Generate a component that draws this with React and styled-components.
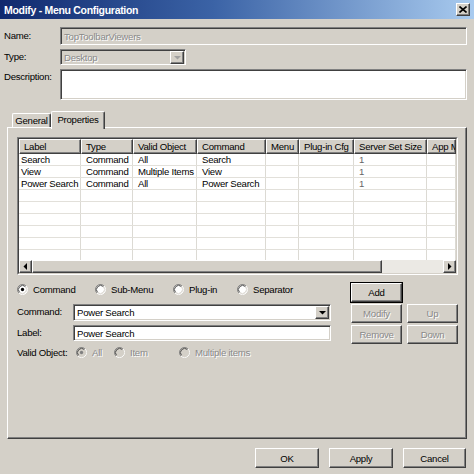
import React from 'react';
import styled, { createGlobalStyle, css } from 'styled-components';

const GlobalStyle = createGlobalStyle`
  html, body { margin: 0; padding: 0; background: #d4d0c8; }
  body {
    font-family: "Liberation Sans", Arial, sans-serif;
    font-size: 9.6px;
    letter-spacing: -0.25px;
    color: #000;
  }
  * { box-sizing: border-box; }
`;

const raised = css`
  border: 1px solid;
  border-color: #fff #404040 #404040 #fff;
  box-shadow: inset -1px -1px #808080;
  background: #d4d0c8;
`;

const sunken = css`
  border: 1px solid;
  border-color: #808080 #fff #fff #808080;
  box-shadow: inset 1px 1px #404040, inset -1px -1px #d4d0c8;
`;

const disabledText = css`
  color: #8a8a8a;
  text-shadow: 1px 1px 0 #fff;
`;

const Window = styled.div`
  width: 474px;
  height: 474px;
  display: flex;
  flex-direction: column;
  overflow: hidden;
  background: #d4d0c8;
`;

const TitleBar = styled.div`
  height: 19px;
  flex: none;
  display: flex;
  align-items: center;
  justify-content: space-between;
  padding: 0 4px 0 4px;
  background: linear-gradient(90deg, #10296e 0%, #3b63a6 45%, #a9cbef 100%);
`;

const Title = styled.span`
  color: #fff;
  font-weight: bold;
  font-size: 10.5px;
  letter-spacing: -0.3px;
`;

const CloseBtn = styled.div`
  ${raised}
  width: 14px;
  height: 13px;
  display: flex;
  align-items: center;
  justify-content: center;
`;

const TopForm = styled.div`
  display: grid;
  grid-template-columns: 56px 1fr;
  row-gap: 4px;
  padding: 8px 7px 0 4px;
`;

const FieldLabel = styled.div`
  padding-top: ${p => p.$pt ?? 3}px;
  white-space: nowrap;
  ${p => p.$disabled && disabledText}
`;

const TextBox = styled.div`
  ${sunken}
  height: ${p => p.$h}px;
  width: ${p => (p.$w ? `${p.$w}px` : 'auto')};
  background: ${p => (p.$disabled ? '#d4d0c8' : '#fff')};
  padding: 0 3px;
  display: flex;
  align-items: center;
  justify-content: space-between;
  white-space: nowrap;
  overflow: hidden;
`;

const BoxText = styled.span`
  ${p => p.$disabled && disabledText}
`;

const DropBtn = styled.div`
  ${raised}
  width: 14px;
  height: 13px;
  margin-right: -2px;
  display: flex;
  align-items: center;
  justify-content: center;
  flex: none;
`;

const TabArea = styled.div`
  margin: 11px 7px 0 7px;
  display: flex;
  flex-direction: column;
`;

const TabStrip = styled.div`
  display: flex;
  align-items: flex-end;
  height: 16px;
  padding-left: 5px;
`;

const Tab = styled.div`
  height: ${p => (p.$active ? 18 : 14)}px;
  width: ${p => p.$w}px;
  border: 1px solid;
  border-color: #fff #404040 transparent #fff;
  border-bottom: none;
  border-radius: 2px 2px 0 0;
  background: #d4d0c8;
  display: flex;
  align-items: ${p => (p.$active ? 'flex-start' : 'center')};
  padding-top: ${p => (p.$active ? 2 : 0)}px;
  justify-content: center;
  margin-bottom: ${p => (p.$active ? -2 : 0)}px;
  z-index: ${p => (p.$active ? 1 : 0)};
  box-shadow: inset -1px 0 #808080;
`;

const Panel = styled.div`
  height: 312px;
  border: 1px solid;
  border-color: #fff #404040 #404040 #fff;
  box-shadow: inset -1px -1px #808080;
  padding: 9px 8px 0 9px;
  display: flex;
  flex-direction: column;
`;

const ListOuter = styled.div`
  height: 138px;
  border: 1px solid;
  border-color: #808080 #fff #fff #808080;
`;

const ListInner = styled.div`
  height: 100%;
  border: 1px solid;
  border-color: #404040 #d4d0c8 #d4d0c8 #404040;
  background: #fff;
  display: flex;
  flex-direction: column;
`;

const COLS = '62px 52px 64px 69px 33px 55px 73px 1fr';

const HeaderRow = styled.div`
  display: grid;
  grid-template-columns: ${COLS};
  height: 15px;
  flex: none;
`;

const HeaderCell = styled.div`
  ${raised}
  padding-left: 4px;
  line-height: 13px;
  white-space: nowrap;
  overflow: hidden;
`;

const Body = styled.div`
  flex: 1;
  overflow: hidden;
`;

const Row = styled.div`
  display: grid;
  grid-template-columns: ${COLS};
  height: 12px;
  border-bottom: 1px solid #e2e0da;
`;

const Cell = styled.div`
  padding-left: ${p => (p.$first ? 2 : 5)}px;
  line-height: 11px;
  white-space: nowrap;
  overflow: hidden;
  border-right: 1px solid #dcdad4;
  color: ${p => (p.$dim ? '#666' : '#000')};
`;

const ScrollBar = styled.div`
  height: 13px;
  flex: none;
  display: flex;
`;

const ScrollBtn = styled.div`
  ${raised}
  width: 13px;
  height: 13px;
  flex: none;
  display: flex;
  align-items: center;
  justify-content: center;
`;

const Thumb = styled.div`
  ${raised}
  width: 350px;
  height: 13px;
  flex: none;
`;

const Track = styled.div`
  flex: 1;
  background: #ebe9e4;
`;

const Lower = styled.div`
  display: grid;
  grid-template-columns: 314px 107px;
  column-gap: 20px;
  margin-top: 8px;
`;

const LeftCol = styled.div`
  display: flex;
  flex-direction: column;
`;

const RadioRow = styled.div`
  display: grid;
  grid-template-columns: 78px 78px 64px auto;
  height: 13px;
  align-items: center;
`;

const RadioItem = styled.label`
  display: flex;
  align-items: center;
  gap: 5px;
  white-space: nowrap;
  width: ${p => (p.$w ? `${p.$w}px` : 'auto')};
  ${p => p.$disabled && disabledText}
`;

const FormRow = styled.div`
  display: grid;
  grid-template-columns: 56px 258px;
  align-items: start;
  margin-top: ${p => p.$mt}px;
`;

const ValidRow = styled.div`
  display: flex;
  align-items: center;
  height: 13px;
  margin-top: 5px;
`;

const ValidLabel = styled.div`
  width: 59px;
  white-space: nowrap;
`;

const BtnGrid = styled.div`
  display: grid;
  grid-template-columns: 51px 51px;
  column-gap: 5px;
  row-gap: 2px;
  align-content: start;
`;

const Button = styled.div`
  ${raised}
  height: ${p => p.$h || 19}px;
  width: ${p => (p.$w ? `${p.$w}px` : 'auto')};
  display: flex;
  align-items: center;
  justify-content: center;
  white-space: nowrap;
  ${p => p.$default && css`
    outline: 1px solid #000;
    outline-offset: 0;
  `}
  ${p => p.$disabled && disabledText}
`;

const Spacer = styled.div``;

const Footer = styled.div`
  display: flex;
  justify-content: flex-end;
  gap: 10px;
  margin-top: 9px;
  padding-right: 8px;
`;

const Radio = ({ checked, disabled }) => (
  <svg width="11" height="11" viewBox="0 0 12 12" style={{ flex: 'none' }}>
    <circle cx="6" cy="6" r="5" fill={disabled ? '#d4d0c8' : '#fff'} />
    <path d="M2.11 9.89 A5.5 5.5 0 0 1 9.89 2.11" fill="none" stroke="#808080" strokeWidth="1" />
    <path d="M2.82 9.18 A4.5 4.5 0 0 1 9.18 2.82" fill="none" stroke="#404040" strokeWidth="1" />
    <path d="M9.89 2.11 A5.5 5.5 0 0 1 2.11 9.89" fill="none" stroke="#fff" strokeWidth="1" />
    <path d="M9.18 2.82 A4.5 4.5 0 0 1 2.82 9.18" fill="none" stroke="#d4d0c8" strokeWidth="1" />
    {checked && <circle cx="6" cy="6" r="1.8" fill={disabled ? '#808080' : '#000'} />}
  </svg>
);

const Arrow = ({ dir, color = '#000' }) => {
  const pts = {
    down: '1,2 8,2 4.5,5.5',
    left: '5,1 5,8 1.5,4.5',
    right: '2,1 2,8 5.5,4.5',
  }[dir];
  const size = dir === 'down' ? [9, 7] : [7, 9];
  return (
    <svg width={size[0]} height={size[1]} viewBox={`0 0 ${size[0]} ${size[1]}`}>
      <polygon points={pts} fill={color} />
    </svg>
  );
};

const headers = ['Label', 'Type', 'Valid Object', 'Command', 'Menu', 'Plug-in Cfg', 'Server Set Size', 'App M'];
const data = [
  ['Search', 'Command', 'All', 'Search', '', '', '1', ''],
  ['View', 'Command', 'Multiple Items', 'View', '', '', '1', ''],
  ['Power Search', 'Command', 'All', 'Power Search', '', '', '1', ''],
];
const rows = [...data, ...Array.from({ length: 6 }, () => Array(8).fill(''))];

export default function App() {
  return (
    <Window>
      <GlobalStyle />
      <TitleBar>
        <Title>Modify - Menu Configuration</Title>
        <CloseBtn>
          <svg width="8" height="7" viewBox="0 0 8 7">
            <path d="M0.5 0.5 L7.5 6.5 M7.5 0.5 L0.5 6.5" stroke="#000" strokeWidth="1.6" />
          </svg>
        </CloseBtn>
      </TitleBar>

      <TopForm>
        <FieldLabel>Name:</FieldLabel>
        <TextBox $h={18} $disabled>
          <BoxText $disabled>TopToolbarViewers</BoxText>
        </TextBox>
        <FieldLabel $pt={2}>Type:</FieldLabel>
        <TextBox $h={16} $w={126} $disabled>
          <BoxText $disabled>Desktop</BoxText>
          <DropBtn>
            <Arrow dir="down" color="#a0a0a0" />
          </DropBtn>
        </TextBox>
        <FieldLabel $pt={2}>Description:</FieldLabel>
        <TextBox $h={31} />
      </TopForm>

      <TabArea>
        <TabStrip>
          <Tab $w={39}>General</Tab>
          <Tab $w={54} $active>Properties</Tab>
        </TabStrip>
        <Panel>
          <ListOuter>
            <ListInner>
              <HeaderRow>
                {headers.map(h => (
                  <HeaderCell key={h}>{h}</HeaderCell>
                ))}
              </HeaderRow>
              <Body>
                {rows.map((r, i) => (
                  <Row key={i}>
                    {r.map((c, j) => (
                      <Cell key={j} $first={j === 0} $dim={j === 6}>
                        {c}
                      </Cell>
                    ))}
                  </Row>
                ))}
              </Body>
              <ScrollBar>
                <ScrollBtn>
                  <Arrow dir="left" />
                </ScrollBtn>
                <Thumb />
                <Track />
                <ScrollBtn>
                  <Arrow dir="right" />
                </ScrollBtn>
              </ScrollBar>
            </ListInner>
          </ListOuter>

          <Lower>
            <LeftCol>
              <RadioRow>
                <RadioItem><Radio checked />Command</RadioItem>
                <RadioItem><Radio />Sub-Menu</RadioItem>
                <RadioItem><Radio />Plug-in</RadioItem>
                <RadioItem><Radio />Separator</RadioItem>
              </RadioRow>
              <FormRow $mt={8}>
                <FieldLabel $pt={2}>Command:</FieldLabel>
                <TextBox $h={17}>
                  <span>Power Search</span>
                  <DropBtn>
                    <Arrow dir="down" />
                  </DropBtn>
                </TextBox>
              </FormRow>
              <FormRow $mt={4}>
                <FieldLabel $pt={2}>Label:</FieldLabel>
                <TextBox $h={16}>
                  <span>Power Search</span>
                </TextBox>
              </FormRow>
              <ValidRow>
                <ValidLabel>Valid Object:</ValidLabel>
                <RadioItem $w={38} $disabled><Radio checked disabled />All</RadioItem>
                <RadioItem $w={65} $disabled><Radio disabled />Item</RadioItem>
                <RadioItem $disabled><Radio disabled />Multiple items</RadioItem>
              </ValidRow>
            </LeftCol>
            <BtnGrid>
              <Button $default>Add</Button>
              <Spacer />
              <Button $disabled>Modify</Button>
              <Button $disabled>Up</Button>
              <Button $disabled>Remove</Button>
              <Button $disabled>Down</Button>
            </BtnGrid>
          </Lower>
        </Panel>
      </TabArea>

      <Footer>
        <Button $w={64} $h={20}>OK</Button>
        <Button $w={64} $h={20}>Apply</Button>
        <Button $w={63} $h={20}>Cancel</Button>
      </Footer>
    </Window>
  );
}
